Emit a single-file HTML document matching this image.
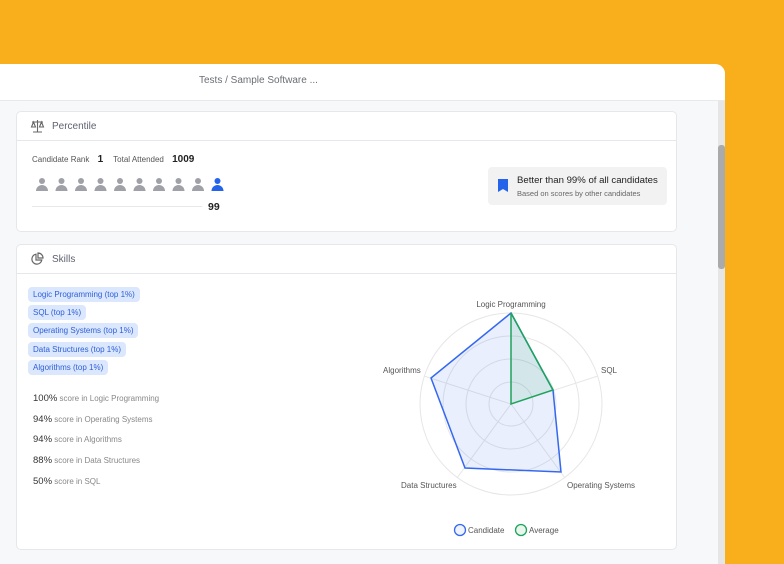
<!DOCTYPE html>
<html><head><style>
*{margin:0;padding:0;box-sizing:border-box}
body{width:784px;height:560px;background:#F9AE1B;font-family:"Liberation Sans",sans-serif;position:relative;overflow:hidden}
.panel{position:absolute;left:0;top:64px;width:725px;height:500px;background:#f7f8fa;border-top-right-radius:10px;overflow:hidden}
.hdr{height:37px;background:#fff;border-bottom:1px solid #e8e9ec;font-size:10px;color:#6b6e76;padding-left:199px;line-height:34px}
.sb{position:absolute;left:718px;top:37px;width:7px;height:470px;background:#e6e6e6}
.thumb{position:absolute;left:718px;top:81px;width:7px;height:124px;background:#aaa;border-radius:3px}
.card{position:absolute;left:16px;width:661px;background:#fff;border:1px solid #e6e7ea;border-radius:5px}
.ch{height:29px;border-bottom:1px solid #e6e7ea;font-size:10px;color:#5f6270;line-height:29px;padding-left:35px;position:relative}
.ch svg{position:absolute;left:13px;top:7px}
.tag{position:absolute;left:11px;background:#dbe7fd;color:#2e5fd8;font-size:8px;height:15px;line-height:15px;padding:0 5px;border-radius:4px}
.sc{position:absolute;left:16px;font-size:8px;color:#888}
.sc b{font-weight:normal;color:#333;font-size:9.5px}
</style></head><body>
<div class="panel">
<div class="hdr">Tests / Sample Software ...</div>
<div class="sb"></div><div class="thumb"></div>
<div class="card" style="top:47px;height:121px">
<div class="ch"><svg width="15" height="14" viewBox="0 0 15 14" fill="none" stroke="#666" stroke-width="1.1"><path d="M7.5 1v12M3 13h9M2 3h11M3.5 3l-2 5h4zM11.5 3l-2 5h4z"/></svg>Percentile</div>
<div style="position:absolute;left:15px;top:42px;font-size:8px;color:#555">Candidate Rank <b style="color:#222;font-size:10px;margin:0 10px 0 6px">1</b>Total Attended <b style="color:#222;font-size:10px;margin-left:6px">1009</b></div>
<svg style="position:absolute;left:17px;top:65px" width="200" height="20">
<g fill="#a0a0a8">
<g id="p"><circle cx="8" cy="4" r="3"/><path d="M2 14a6 6 0 0 1 12 0z"/></g>
<use href="#p" x="19.5"/><use href="#p" x="39"/><use href="#p" x="58.5"/><use href="#p" x="78"/><use href="#p" x="97.5"/><use href="#p" x="117"/><use href="#p" x="136.5"/><use href="#p" x="156"/>
</g>
<g fill="#2563eb"><circle cx="183.5" cy="4" r="3"/><path d="M177.5 14a6 6 0 0 1 12 0z"/></g>
</svg>
<div style="position:absolute;left:15px;top:94px;width:170px;height:1px;background:#e8e8ea"></div>
<div style="position:absolute;left:191px;top:89px;font-size:10.5px;font-weight:bold;color:#222">99</div>
<div style="position:absolute;left:471px;top:55px;width:179px;height:38px;background:#f2f2f3;border-radius:4px">
<svg style="position:absolute;left:10px;top:12px" width="10" height="14"><path d="M0 0h10v13l-5-3-5 3z" fill="#2563eb"/></svg>
<div style="position:absolute;left:29px;top:8px;font-size:9.6px;color:#222">Better than 99% of all candidates</div>
<div style="position:absolute;left:29px;top:22px;font-size:7.5px;color:#666">Based on scores by other candidates</div>
</div>
</div>
<div class="card" style="top:180px;height:306px">
<div class="ch"><svg width="14" height="14" viewBox="0 0 14 14" fill="none" stroke="#666" stroke-width="1.2"><path d="M6 2.2A5 5 0 1 0 11.8 8H6z"/><path d="M8 1v5h5A5 5 0 0 0 8 1z"/></svg>Skills</div>
<div class="tag" style="top:42px">Logic Programming (top 1%)</div>
<div class="tag" style="top:60px">SQL (top 1%)</div>
<div class="tag" style="top:78px">Operating Systems (top 1%)</div>
<div class="tag" style="top:97px">Data Structures (top 1%)</div>
<div class="tag" style="top:115px">Algorithms (top 1%)</div>
<div class="sc" style="top:148px"><b>100%</b> score in Logic Programming</div>
<div class="sc" style="top:169px"><b>94%</b> score in Operating Systems</div>
<div class="sc" style="top:189px"><b>94%</b> score in Algorithms</div>
<div class="sc" style="top:210px"><b>88%</b> score in Data Structures</div>
<div class="sc" style="top:231px"><b>50%</b> score in SQL</div>
</div>
</div>
<svg style="position:absolute;left:0;top:0" width="784" height="560">
<g fill="none" stroke="#e6e6e6" stroke-width="1">
<circle cx="511" cy="404" r="91"/><circle cx="511" cy="404" r="68"/><circle cx="511" cy="404" r="45"/><circle cx="511" cy="404" r="22"/>
<path d="M511 404V313M511 404L598 376M511 404L565 478M511 404L457 478M511 404L424 376"/>
</g>
<polygon points="511,313 553,390 561,472 465,468 431,378" fill="rgba(37,99,235,0.1)" stroke="#3568f0" stroke-width="1.5"/>
<polygon points="511,313 553,390 511,404" fill="rgba(22,163,74,0.1)" stroke="#1ea45a" stroke-width="1.5"/>
<g font-size="8" fill="#555" font-family="Liberation Sans">
<text x="511" y="307" text-anchor="middle">Logic Programming</text>
<text x="601" y="373">SQL</text>
<text x="567" y="488">Operating Systems</text>
<text x="401" y="488">Data Structures</text>
<text x="383" y="373">Algorithms</text>
<circle cx="460" cy="530" r="5.5" fill="#eef3fe" stroke="#3568f0" stroke-width="1.3"/><text x="468" y="533">Candidate</text>
<circle cx="521" cy="530" r="5.5" fill="#e8f6ee" stroke="#1ea45a" stroke-width="1.3"/><text x="529" y="533">Average</text>
</g>
</svg>
</body></html>
